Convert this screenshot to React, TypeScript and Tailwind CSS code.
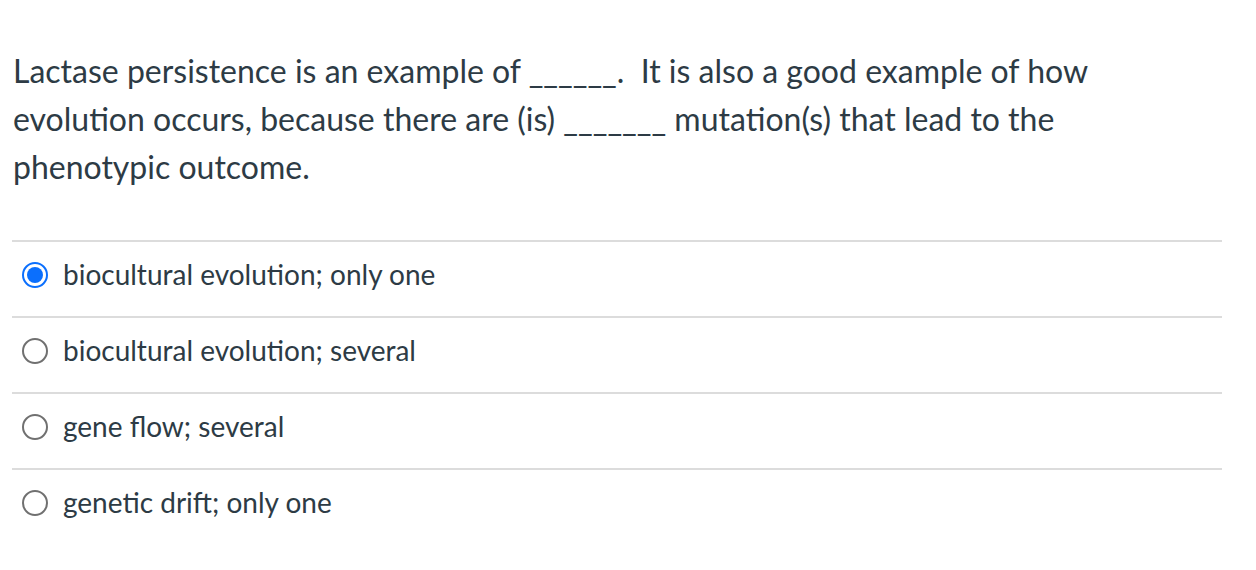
export default function App() {
  const options = [
    { label: "biocultural evolution; only one", selected: true },
    { label: "biocultural evolution; several", selected: false },
    { label: "gene flow; several", selected: false },
    { label: "genetic drift; only one", selected: false },
  ];

  return (
    <div className="bg-white min-h-[570px] px-[12px] pt-[47px] font-['Lato','Liberation_Sans',sans-serif] text-[#2d3b45]">
      <p className="text-[32px] leading-[48px] pl-[1px]">
        Lactase persistence is an example of ______.&nbsp; It is also a good example of how
        <br />
        evolution occurs, because there are (is) _______ mutation(s) that lead to the
        <br />
        phenotypic outcome.
      </p>
      <div className="mt-[49px] w-[1210px]">
        {options.map((opt) => (
          <div
            key={opt.label}
            className="border-t-2 border-[#dcdcdc] h-[76px] flex items-center gap-[15px] pl-[10px] pb-[8px]"
          >
            {opt.selected ? (
              <span className="w-[26px] h-[26px] rounded-full border-[2px] border-[#0b6ffd] flex items-center justify-center">
                <span className="w-[16px] h-[16px] rounded-full bg-[#0b6ffd]" />
              </span>
            ) : (
              <span className="w-[26px] h-[26px] rounded-full border-[2px] border-[#707070]" />
            )}
            <span className="text-[28px] -mt-[2px]">{opt.label}</span>
          </div>
        ))}
      </div>
    </div>
  );
}
